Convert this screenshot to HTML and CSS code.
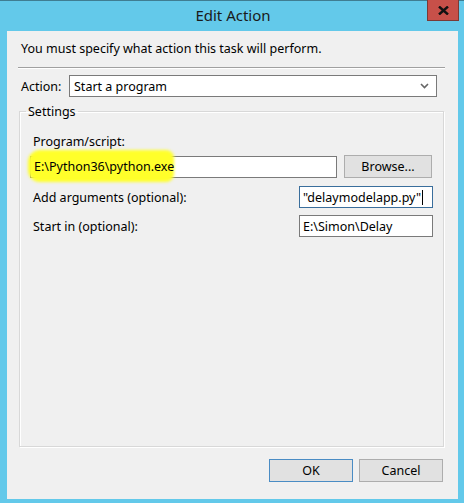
FILE: index.html
```html
<!DOCTYPE html>
<html>
<head>
<meta charset="utf-8">
<link rel="stylesheet" href="styles.css">
</head>
<body>
<div class="window">
  <div class="titlebar">
    <span class="title">Edit Action</span>
    <div class="close"><svg width="11" height="9" viewBox="0 0 11 9"><path d="M1 0.5 L10 8.5 M10 0.5 L1 8.5" stroke="#111" stroke-width="2.4"/></svg></div>
  </div>
  <div class="client">
    <div class="instr">You must specify what action this task will perform.</div>
    <div class="sep"></div>
    <div class="action-row">
      <span class="label">Action:</span>
      <div class="select"><span>Start a program</span><svg class="chev" width="9" height="6" viewBox="0 0 9 6"><path d="M1 1 L4.5 4.5 L8 1" stroke="#666" stroke-width="1.6" fill="none"/></svg></div>
    </div>
    <fieldset class="group">
      <legend>Settings</legend>
      <div class="field-label">Program/script:</div>
      <div class="prog-row">
        <div class="input wide"><span class="hl"></span><span class="txt">E:\Python36\python.exe</span></div>
        <div class="btn browse">Browse...</div>
      </div>
      <div class="opt-row args">
        <span class="label">Add arguments (optional):</span>
        <div class="input small focus"><span class="txt">"delaymodelapp.py"</span><span class="caret"></span></div>
      </div>
      <div class="opt-row">
        <span class="label">Start in (optional):</span>
        <div class="input small"><span class="txt">E:\Simon\Delay</span></div>
      </div>
    </fieldset>
    <div class="buttons">
      <div class="btn default">OK</div>
      <div class="btn">Cancel</div>
    </div>
  </div>
</div>
</body>
</html>
```

FILE: styles.css
```css
html, body {
  margin: 0;
  padding: 0;
}
body {
  width: 464px;
  height: 503px;
  overflow: hidden;
  background: #62c8ea;
  font-family: "Noto Sans", "Open Sans", sans-serif;
  font-size: 12.5px;
  color: #000;
}
.window {
  position: relative;
  width: 464px;
  height: 503px;
  box-sizing: border-box;
  border-top: 1px solid #3f7d92;
  background: #63c9ea;
  display: flex;
  flex-direction: column;
}
.titlebar {
  height: 30px;
  display: flex;
  justify-content: center;
  align-items: center;
}
.title {
  font-size: 15px;
  color: #1a1a1a;
  margin-left: 2px;
  margin-top: -2px;
}
.close {
  position: absolute;
  top: -1px;
  left: 427px;
  width: 30px;
  height: 20px;
  background: #c75049;
  border: 1px solid #7a3a36;
  border-top: none;
  display: flex;
  align-items: center;
  justify-content: center;
}
.client {
  margin: 0 6px 0 7px;
  height: 468px;
  background: #f0f0f0;
  box-sizing: border-box;
  padding: 10px 0 0 0;
  display: flex;
  flex-direction: column;
}
.instr {
  margin-left: 14px;
  line-height: 15px;
}
.sep {
  margin: 11px 13px 0 11px;
  border-top: 1px solid #a0a0a0;
  border-bottom: 1px solid #ffffff;
}
.action-row {
  display: flex;
  align-items: center;
  margin: 6px 0 0 14px;
  height: 22px;
}
.action-row .label {
  width: 48px;
}
.select {
  width: 368px;
  height: 22px;
  box-sizing: border-box;
  background: #fff;
  border: 1px solid #7a7a7a;
  display: flex;
  align-items: center;
  justify-content: space-between;
  padding: 0 7px 0 4px;
}
.group {
  margin: 7px 14px 0 12px;
  padding: 0;
  height: 343px;
  box-sizing: border-box;
  border: 1px solid #d8d8d8;
  box-shadow: inset 1px 1px 0 #fff, 1px 1px 0 #fff;
  min-width: 0;
}
.group legend {
  margin-left: 6px;
  padding: 0 2px;
  line-height: 15px;
}
.field-label {
  margin: 15px 0 0 13px;
  line-height: 15px;
}
.prog-row {
  display: flex;
  align-items: center;
  margin: 6px 0 0 10px;
}
.input {
  position: relative;
  height: 22px;
  box-sizing: border-box;
  background: #fff;
  border: 1px solid #7a7a7a;
  display: flex;
  align-items: center;
  padding-left: 3px;
}
.input .txt {
  position: relative;
}
.wide {
  width: 307px;
}
.hl {
  position: absolute;
  left: -3px;
  top: -7px;
  width: 146px;
  height: 32px;
  background: #ffff2a;
  border-radius: 12px 8px 8px 12px;
  filter: blur(1.5px);
}
.btn {
  height: 23px;
  box-sizing: border-box;
  background: #e1e1e1;
  border: 1px solid #adadad;
  display: flex;
  align-items: center;
  justify-content: center;
}
.browse {
  width: 88px;
  margin-left: 7px;
}
.opt-row {
  display: flex;
  align-items: center;
  justify-content: space-between;
  margin: 7px 10px 0 13px;
}
.opt-row.args {
  margin-top: 8px;
}
.small {
  width: 134px;
}
.focus {
  border-color: #3a6e9c;
}
.caret {
  width: 1px;
  height: 15px;
  background: #000;
  margin-left: 1px;
}
.buttons {
  display: flex;
  justify-content: flex-end;
  gap: 6px;
  margin: 12px 15px 0 0;
}
.buttons .btn {
  width: 84px;
}
.buttons .default {
  border-color: #4a8cc4;
}
```
